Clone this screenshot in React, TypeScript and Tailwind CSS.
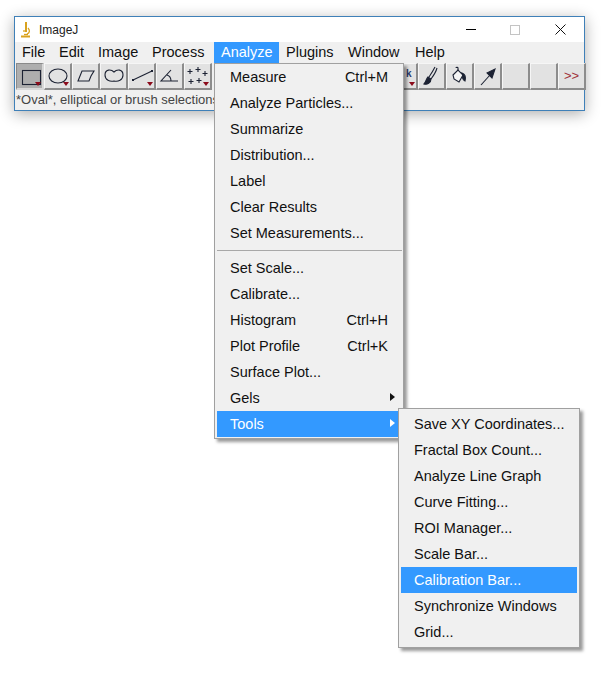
const topItems = [
  { label: 'File', width: 'w-[37px]' },
  { label: 'Edit', width: 'w-[39px]' },
  { label: 'Image', width: 'w-[54px]' },
  { label: 'Process', width: 'w-[69px]' },
  { label: 'Analyze', width: 'w-[65px]' },
  { label: 'Plugins', width: 'w-[62px]' },
  { label: 'Window', width: 'w-[67px]' },
  { label: 'Help', width: 'w-[40px]' },
];

type MenuRow = { label: string; shortcut?: string; arrow?: boolean; active?: boolean };

const analyzeTop: MenuRow[] = [
  { label: 'Measure', shortcut: 'Ctrl+M' },
  { label: 'Analyze Particles...' },
  { label: 'Summarize' },
  { label: 'Distribution...' },
  { label: 'Label' },
  { label: 'Clear Results' },
  { label: 'Set Measurements...' },
];

const analyzeBottom: MenuRow[] = [
  { label: 'Set Scale...' },
  { label: 'Calibrate...' },
  { label: 'Histogram', shortcut: 'Ctrl+H' },
  { label: 'Plot Profile', shortcut: 'Ctrl+K' },
  { label: 'Surface Plot...' },
  { label: 'Gels', arrow: true },
  { label: 'Tools', arrow: true, active: true },
];

const toolsItems: MenuRow[] = [
  { label: 'Save XY Coordinates...' },
  { label: 'Fractal Box Count...' },
  { label: 'Analyze Line Graph' },
  { label: 'Curve Fitting...' },
  { label: 'ROI Manager...' },
  { label: 'Scale Bar...' },
  { label: 'Calibration Bar...', active: true },
  { label: 'Synchronize Windows' },
  { label: 'Grid...' },
];

function Row({ row }: { row: MenuRow }) {
  return (
    <div className={`flex h-[26px] items-center justify-between pl-[13px] pr-[6px] pt-[2px] ${row.active ? 'bg-[#3399ff] text-white' : 'text-[#111]'}`}>
      <span>{row.label}</span>
      {row.shortcut && <span className="pr-[8px]">{row.shortcut}</span>}
      {row.arrow && (
        <svg width="5" height="8" viewBox="0 0 5 8" className="mb-[4px] mr-[1px]">
          <path d="M0 0L5 4L0 8Z" fill={row.active ? '#ffffff' : '#111111'} />
        </svg>
      )}
    </div>
  );
}

function Corner() {
  return (
    <svg width="6" height="4" viewBox="0 0 6 4" className="absolute bottom-[2px] right-[1px]">
      <path d="M0 0H6L3 4Z" fill="#8b0a1a" />
    </svg>
  );
}

function ToolButton({ selected, corner, children }: { selected?: boolean; corner?: boolean; children?: React.ReactNode }) {
  return (
    <div
      className={`relative flex h-[27px] w-[28px] shrink-0 items-center justify-center border-r-2 border-b-2 border-l border-t ${
        selected
          ? 'border-t-[#8a8a8a] border-l-[#8a8a8a] border-r-[#d8d8d8] border-b-[#d8d8d8] bg-[#aeaeae]'
          : 'border-t-[#f6f6f6] border-l-[#f6f6f6] border-r-[#8c8c8c] border-b-[#8c8c8c] bg-[#e2e2e2]'
      }`}
    >
      {children}
      {corner && <Corner />}
    </div>
  );
}

function Icon({ children }: { children: React.ReactNode }) {
  return (
    <svg
      width="25"
      height="24"
      viewBox="0 0 25 24"
      fill="none"
      stroke="#1c2233"
      strokeWidth="1.1"
      className="absolute left-0 top-0"
    >
      {children}
    </svg>
  );
}

function Microscope() {
  return (
    <svg width="10" height="16" viewBox="0 0 10 16" fill="none" stroke="#d9a21e" strokeWidth="1.3">
      <path d="M5 0V10" strokeWidth="2" />
      <path d="M7 6C9 8 9 11 6 12" />
      <path d="M2 9H6" />
      <path d="M0 14.5H9" strokeWidth="2" />
      <path d="M3 12.5H7" />
    </svg>
  );
}

export default function App() {
  return (
    <div className="relative h-[689px] w-[612px] overflow-hidden bg-white font-['Liberation_Sans',Arial,sans-serif] text-[14.5px]">
      {/* ImageJ window */}
      <div className="absolute left-[14px] top-[16px] w-[571px] border border-[#3f80b8] bg-[#f0f0f0] shadow-[0_3px_14px_rgba(0,0,0,0.32)]">
        <div className="flex h-[25px] items-center bg-white pl-[6px]">
          <Microscope />
          <span className="ml-[8px] text-[12px] text-[#222]">ImageJ</span>
          <div className="ml-auto flex items-center">
            <div className="mr-[34px] h-[1px] w-[10px] bg-black" />
            <div className="mr-[35px] h-[10px] w-[10px] border border-[#c4c4c4]" />
            <svg width="11" height="11" viewBox="0 0 11 11" className="mr-[18px]" stroke="#111" strokeWidth="1">
              <path d="M0.5 0.5L10.5 10.5M10.5 0.5L0.5 10.5" />
            </svg>
          </div>
        </div>
        <div className="flex h-[21px] items-center text-[#111]">
          {topItems.map((item) => (
            <span
              key={item.label}
              className={`flex h-[21px] items-center pl-[7px] pt-[1px] ${item.width} ${item.label === 'Analyze' ? 'bg-[#3399ff] text-white' : ''}`}
            >
              {item.label}
            </span>
          ))}
        </div>
        <div className="flex pl-[1px]">
          <ToolButton selected corner>
            <Icon><rect x="5.5" y="6.5" width="18" height="14" fill="#aeaeae" /></Icon>
          </ToolButton>
          <ToolButton corner>
            <Icon><ellipse cx="13" cy="12" rx="9" ry="7" /></Icon>
          </ToolButton>
          <ToolButton>
            <Icon><path d="M5 17L9 7H21L18 12L16 17Z" /></Icon>
          </ToolButton>
          <ToolButton>
            <Icon><path d="M4 11C4 5 10 5 13 8C16 5 22 5 22 11C22 16 17 18 13 17C9 18 4 16 4 11Z" /></Icon>
          </ToolButton>
          <ToolButton corner>
            <Icon>
              <path d="M4 16L23 7" />
              <rect x="3" y="15" width="2" height="2" fill="#1c2233" stroke="none" />
              <rect x="22" y="6" width="2" height="2" fill="#1c2233" stroke="none" />
            </Icon>
          </ToolButton>
          <ToolButton>
            <Icon><path d="M14 6L4 17H21M10 11C13 12 14 14 14 17" /></Icon>
          </ToolButton>
          <ToolButton corner>
            <Icon>
              <path d="M5 5V10M2.5 7.5H7.5M13 3V8M10.5 5.5H15.5M20 7V12M17.5 9.5H22.5M6 15V20M3.5 17.5H8.5M14 14V19M11.5 16.5H16.5" />
            </Icon>
          </ToolButton>
          <div className="ml-[178px]">
            <ToolButton corner>
              <span className="absolute left-[15px] top-[5px] text-[10px] font-bold leading-none text-[#2a3a6a]">k</span>
            </ToolButton>
          </div>
          <ToolButton>
            <Icon>
              <path d="M16 3C14 7 12 10 10 13M18 4C17 8 15 11 12 15" />
              <path d="M9 13C7 15 7 18 5 20C8 21 12 19 12 15Z" fill="#1c2233" />
            </Icon>
          </ToolButton>
          <ToolButton>
            <Icon>
              <path d="M9 4C9 3 11 3 11 4V9" />
              <path d="M6 11L11 6L16 11L12 18L7 15Z" fill="#f4f4f4" />
              <path d="M15 9C18 10 19 13 18 17C16 16 15 14 16 11Z" fill="#1c2233" />
            </Icon>
          </ToolButton>
          <ToolButton>
            <Icon>
              <path d="M6 21L15 11" />
              <path d="M12 9L20 5L17 14Z" fill="#1c2233" />
            </Icon>
          </ToolButton>
          <ToolButton />
          <ToolButton />
          <ToolButton>
            <span className="text-[13px] text-[#a03038]">&gt;&gt;</span>
          </ToolButton>
        </div>
        <div className="flex h-[20px] items-center overflow-hidden whitespace-nowrap pl-[1px] text-[13px] text-[#444]">
          *Oval*, elliptical or brush selections
        </div>
      </div>

      {/* Analyze menu */}
      <div className="absolute left-[214px] top-[63px] w-[190px] border border-[#a0a0a0] bg-[#f0f0f0] pl-[2px] pr-[1px] pb-[1px] shadow-[3px_3px_3px_rgba(0,0,0,0.4)]">
        {analyzeTop.map((row) => (
          <Row key={row.label} row={row} />
        ))}
        <div className="my-[4px] h-[1px] bg-[#a8a8a8]" />
        {analyzeBottom.map((row) => (
          <Row key={row.label} row={row} />
        ))}
      </div>

      {/* Tools submenu */}
      <div className="absolute left-[398px] top-[408px] w-[182px] border border-[#a0a0a0] bg-[#f0f0f0] p-[2px] shadow-[3px_3px_3px_rgba(0,0,0,0.4)]">
        {toolsItems.map((row) => (
          <Row key={row.label} row={row} />
        ))}
      </div>
    </div>
  );
}
